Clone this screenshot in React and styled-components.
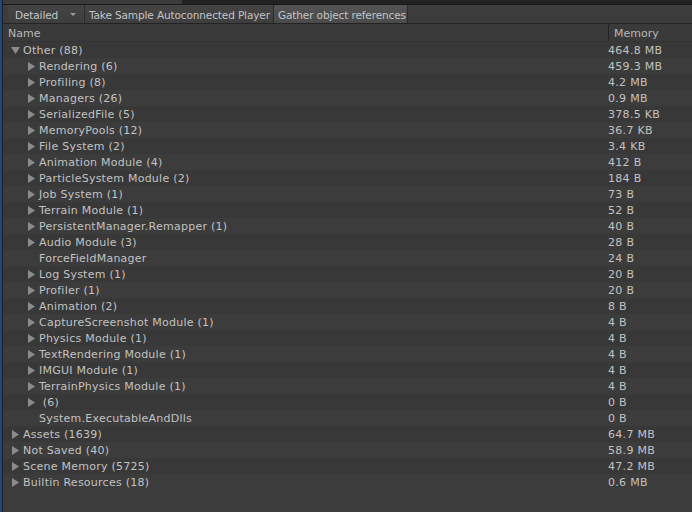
import React from "react";
import styled, { createGlobalStyle } from "styled-components";

const GlobalStyle = createGlobalStyle`
  html, body {
    margin: 0;
    padding: 0;
    background: #3d3d3d;
    overflow: hidden;
  }
  body {
    font-family: "DejaVu Sans", "Liberation Sans", sans-serif;
    font-size: 11px;
    color: #c2c2c2;
  }
`;

const rows = [
  { name: "Other (88)", size: "464.8 MB", level: 0, open: true },
  { name: "Rendering (6)", size: "459.3 MB", level: 1 },
  { name: "Profiling (8)", size: "4.2 MB", level: 1 },
  { name: "Managers (26)", size: "0.9 MB", level: 1 },
  { name: "SerializedFile (5)", size: "378.5 KB", level: 1 },
  { name: "MemoryPools (12)", size: "36.7 KB", level: 1 },
  { name: "File System (2)", size: "3.4 KB", level: 1 },
  { name: "Animation Module (4)", size: "412 B", level: 1 },
  { name: "ParticleSystem Module (2)", size: "184 B", level: 1 },
  { name: "Job System (1)", size: "73 B", level: 1 },
  { name: "Terrain Module (1)", size: "52 B", level: 1 },
  { name: "PersistentManager.Remapper (1)", size: "40 B", level: 1 },
  { name: "Audio Module (3)", size: "28 B", level: 1 },
  { name: "ForceFieldManager", size: "24 B", level: 1, leaf: true },
  { name: "Log System (1)", size: "20 B", level: 1 },
  { name: "Profiler (1)", size: "20 B", level: 1 },
  { name: "Animation (2)", size: "8 B", level: 1 },
  { name: "CaptureScreenshot Module (1)", size: "4 B", level: 1 },
  { name: "Physics Module (1)", size: "4 B", level: 1 },
  { name: "TextRendering Module (1)", size: "4 B", level: 1 },
  { name: "IMGUI Module (1)", size: "4 B", level: 1 },
  { name: "TerrainPhysics Module (1)", size: "4 B", level: 1 },
  { name: " (6)", size: "0 B", level: 1 },
  { name: "System.ExecutableAndDlls", size: "0 B", level: 1, leaf: true },
  { name: "Assets (1639)", size: "64.7 MB", level: 0 },
  { name: "Not Saved (40)", size: "58.9 MB", level: 0 },
  { name: "Scene Memory (5725)", size: "47.2 MB", level: 0 },
  { name: "Builtin Resources (18)", size: "0.6 MB", level: 0 },
];

const Window = styled.div`
  display: flex;
  width: 692px;
  height: 512px;
`;

const EdgeStripe = styled.div`
  width: 2px;
  background: #1c4a7c;
  border-right: 1px solid #1f1f1f;
  flex: none;
`;

const Main = styled.div`
  flex: 1;
  display: flex;
  flex-direction: column;
  min-width: 0;
`;

const TopBand = styled.div`
  display: flex;
  flex: none;
  height: 4px;
  border-bottom: 1px solid #191919;
`;

const TopTab = styled.div`
  width: 179px;
  background: #3b3b3b;
  border-right: 1px solid #1e1e1e;
`;

const TopRest = styled.div`
  flex: 1;
  background: #222222;
`;

const Toolbar = styled.div`
  display: flex;
  flex: none;
  align-items: stretch;
  height: 18px;
  padding-left: 5px;
  background: #3c3c3c;
  border-bottom: 1px solid #232323;
`;

const ToolButton = styled.div`
  display: flex;
  align-items: center;
  gap: 6px;
  padding: 1px 4px 0 ${(p) => p.$pad || 4}px;
  width: ${(p) => p.$width}px;
  box-sizing: border-box;
  overflow: hidden;
  background: ${(p) =>
    p.$active
      ? "linear-gradient(#535353, #4a4a4a)"
      : "linear-gradient(#444444, #3e3e3e)"};
  border-right: 1px solid #2a2a2a;
  color: #c4c4c4;
  font-size: 10.5px;
  letter-spacing: -0.12px;
  white-space: nowrap;
`;

const DropCaret = styled.span`
  margin-left: auto;
  margin-right: 4px;
  width: 0;
  height: 0;
  border-left: 3px solid transparent;
  border-right: 3px solid transparent;
  border-top: 3px solid #9a9a9a;
`;

const HeaderRow = styled.div`
  display: flex;
  flex: none;
  height: 17px;
  align-items: center;
  background: #3a3a3a;
  border-bottom: 1px solid #333;
  color: #b8b8b8;
`;

const NameHead = styled.div`
  flex: none;
  width: 605px;
  padding: 2px 0 0 5px;
  box-sizing: border-box;
`;

const MemHead = styled.div`
  align-self: stretch;
  display: flex;
  align-items: center;
  padding: 2px 0 0 5px;
  border-left: 1px solid #232323;
`;

const Row = styled.div`
  display: flex;
  flex: none;
  height: 16px;
  align-items: center;
  background: ${(p) => (p.$odd ? "#3c3c3c" : "#383838")};
  white-space: nowrap;
`;

const NameCell = styled.div`
  flex: none;
  width: 605px;
  display: flex;
  align-items: center;
  padding-left: ${(p) => 8 + p.$level * 16}px;
  box-sizing: border-box;
`;

const Arrow = styled.span`
  width: 12px;
  flex: none;
  display: flex;
  align-items: center;
  visibility: ${(p) => (p.$hidden ? "hidden" : "visible")};
`;

const TextSpan = styled.span`
  white-space: pre;
  letter-spacing: 0.25px;
`;

const SizeCell = styled.div`
  letter-spacing: 0.3px;
`;

const Filler = styled.div`
  flex: 1;
  background: #3c3c3c;
`;

function Triangle({ open }) {
  return open ? (
    <svg width="9" height="8" viewBox="0 0 9 8">
      <path d="M0 1 L9 1 L4.5 8 Z" fill="#8c8c8c" />
    </svg>
  ) : (
    <svg width="8" height="9" viewBox="0 0 8 9">
      <path d="M1 0 L8 4.5 L1 9 Z" fill="#8c8c8c" />
    </svg>
  );
}

export default function App() {
  return (
    <>
      <GlobalStyle />
      <Window>
        <EdgeStripe />
        <Main>
          <TopBand>
            <TopTab />
            <TopRest />
          </TopBand>
          <Toolbar>
            <ToolButton $width={77} $pad={7}>
              Detailed
              <DropCaret />
            </ToolButton>
            <ToolButton $width={189}>Take Sample Autoconnected Player</ToolButton>
            <ToolButton $width={134} $active>
              Gather object references
            </ToolButton>
          </Toolbar>
          <HeaderRow>
            <NameHead>Name</NameHead>
            <MemHead>Memory</MemHead>
          </HeaderRow>
          {rows.map((r, i) => (
            <Row key={i} $odd={i % 2 === 1}>
              <NameCell $level={r.level}>
                <Arrow $hidden={r.leaf}>
                  <Triangle open={r.open} />
                </Arrow>
                <TextSpan>{r.name}</TextSpan>
              </NameCell>
              <SizeCell>{r.size}</SizeCell>
            </Row>
          ))}
          <Filler />
        </Main>
      </Window>
    </>
  );
}
